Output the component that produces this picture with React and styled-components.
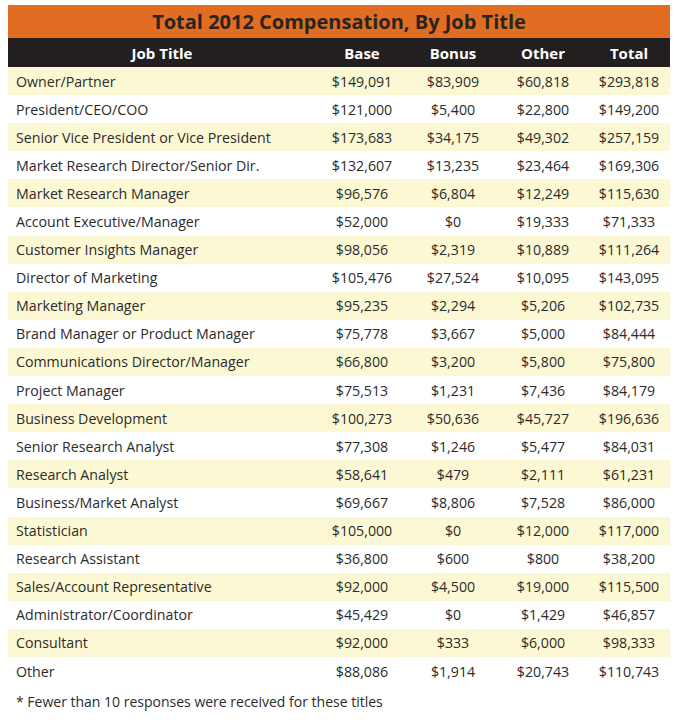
import React from "react";
import styled, { createGlobalStyle } from "styled-components";

const Global = createGlobalStyle`
  html, body { margin: 0; padding: 0; background: #fff; }
  body { font-family: "Open Sans", "Noto Sans", sans-serif; }
`;

const Page = styled.div`
  padding: 5px 5px 0 8px;
  width: 662px;
`;

const Title = styled.div`
  background: #e06d21;
  color: #2a2420;
  height: 33px;
  display: flex;
  align-items: center;
  justify-content: center;
  font-weight: 700;
  font-size: 20px;
`;

const COLS = "308px 92px 90px 90px 82px";

const HeadRow = styled.div`
  display: grid;
  grid-template-columns: ${COLS};
  background: #231f20;
  color: #fff;
  height: 29px;
  align-items: center;
  font-weight: 700;
  font-size: 15px;
`;

const HeadCell = styled.div`
  text-align: center;
`;

const Row = styled.div`
  display: grid;
  grid-template-columns: ${COLS};
  height: 28.1px;
  align-items: center;
  background: ${(p) => (p.$shade ? "#fdf8d4" : "#fff")};
  color: #2b2b2b;
  font-size: 14.2px;
`;

const NameCell = styled.div`
  padding-left: 8px;
  white-space: nowrap;
`;

const NumCell = styled.div`
  text-align: center;
  white-space: nowrap;
`;

const Note = styled.div`
  padding: 7px 0 0 8px;
  font-size: 14px;
  color: #2b2b2b;
`;

const rows = [
  ["Owner/Partner", "$149,091", "$83,909", "$60,818", "$293,818"],
  ["President/CEO/COO", "$121,000", "$5,400", "$22,800", "$149,200"],
  ["Senior Vice President or Vice President", "$173,683", "$34,175", "$49,302", "$257,159"],
  ["Market Research Director/Senior Dir.", "$132,607", "$13,235", "$23,464", "$169,306"],
  ["Market Research Manager", "$96,576", "$6,804", "$12,249", "$115,630"],
  ["Account Executive/Manager", "$52,000", "$0", "$19,333", "$71,333"],
  ["Customer Insights Manager", "$98,056", "$2,319", "$10,889", "$111,264"],
  ["Director of Marketing", "$105,476", "$27,524", "$10,095", "$143,095"],
  ["Marketing Manager", "$95,235", "$2,294", "$5,206", "$102,735"],
  ["Brand Manager or Product Manager", "$75,778", "$3,667", "$5,000", "$84,444"],
  ["Communications Director/Manager", "$66,800", "$3,200", "$5,800", "$75,800"],
  ["Project Manager", "$75,513", "$1,231", "$7,436", "$84,179"],
  ["Business Development", "$100,273", "$50,636", "$45,727", "$196,636"],
  ["Senior Research Analyst", "$77,308", "$1,246", "$5,477", "$84,031"],
  ["Research Analyst", "$58,641", "$479", "$2,111", "$61,231"],
  ["Business/Market Analyst", "$69,667", "$8,806", "$7,528", "$86,000"],
  ["Statistician", "$105,000", "$0", "$12,000", "$117,000"],
  ["Research Assistant", "$36,800", "$600", "$800", "$38,200"],
  ["Sales/Account Representative", "$92,000", "$4,500", "$19,000", "$115,500"],
  ["Administrator/Coordinator", "$45,429", "$0", "$1,429", "$46,857"],
  ["Consultant", "$92,000", "$333", "$6,000", "$98,333"],
  ["Other", "$88,086", "$1,914", "$20,743", "$110,743"],
];

export default function App() {
  return (
    <Page>
      <Global />
      <Title>Total 2012 Compensation, By Job Title</Title>
      <HeadRow>
        <HeadCell>Job Title</HeadCell>
        <HeadCell>Base</HeadCell>
        <HeadCell>Bonus</HeadCell>
        <HeadCell>Other</HeadCell>
        <HeadCell>Total</HeadCell>
      </HeadRow>
      {rows.map((r, i) => (
        <Row key={r[0]} $shade={i % 2 === 0}>
          <NameCell>{r[0]}</NameCell>
          <NumCell>{r[1]}</NumCell>
          <NumCell>{r[2]}</NumCell>
          <NumCell>{r[3]}</NumCell>
          <NumCell>{r[4]}</NumCell>
        </Row>
      ))}
      <Note>* Fewer than 10 responses were received for these titles</Note>
    </Page>
  );
}
